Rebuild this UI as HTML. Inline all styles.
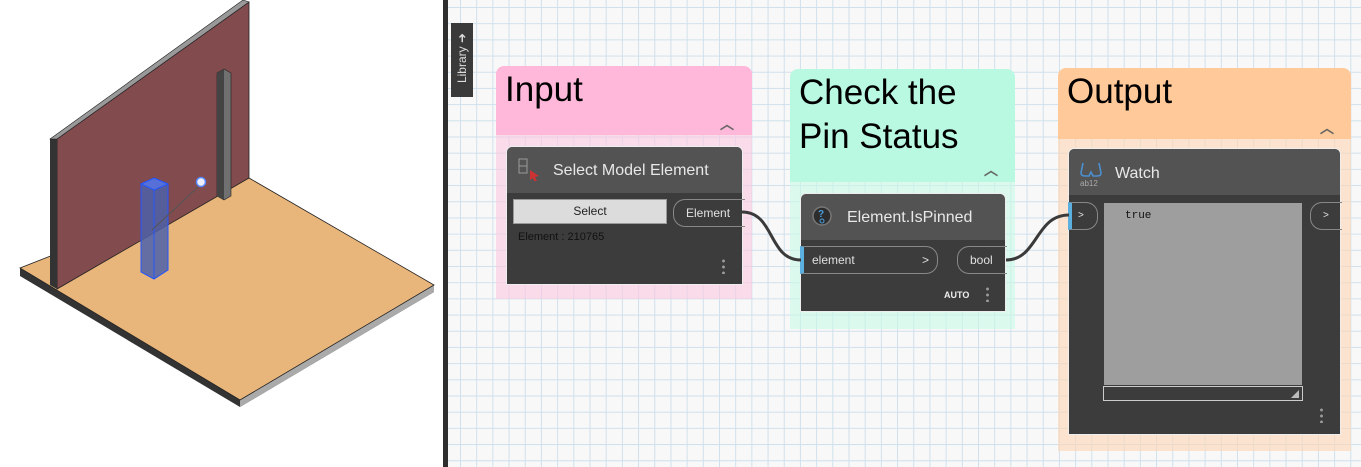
<!DOCTYPE html>
<html><head><meta charset="utf-8"><style>
*{margin:0;padding:0;box-sizing:border-box}
body{width:1361px;height:467px;overflow:hidden;background:#fff;font-family:"Liberation Sans","DejaVu Sans",sans-serif;position:relative}
.canvas{position:absolute;left:448px;top:0;width:913px;height:467px;background-color:#f8f8f8;
background-image:linear-gradient(to right,#d0e0ec 1px,transparent 1px),linear-gradient(to bottom,#d0e0ec 1px,transparent 1px);
background-size:16.2px 16.2px;background-position:12px 7px}
.div{position:absolute;left:443px;top:0;width:5px;height:467px;background:#2e2e2e}
.lib{position:absolute;left:451px;top:23px;width:22px;height:74px;background:#3a3a3a;color:#ddd;font-size:12px}
.lib span{position:absolute;left:-24px;top:28px;transform:rotate(-90deg);width:70px;text-align:center;white-space:nowrap}
.grp{position:absolute;border-radius:8px 8px 0 0;overflow:hidden}
.gh{position:absolute;left:0;right:0;top:0;font-size:35px;color:#000;padding:2px 0 0 9px;line-height:44px}
.gb{position:absolute;left:0;right:0;bottom:0}
.car{position:absolute;font-size:14px;color:#666;font-weight:bold}
.node{position:absolute;background:#3c3c3c;border:1px solid #eee;border-radius:6px 6px 0 0}
.nh{position:absolute;left:0;right:0;top:0;background:#535353;border-radius:6px 6px 0 0;color:#e8e8e8;font-size:16px}
.port{position:absolute;border:1px solid #888;border-radius:12px;color:#e0e0e0;font-size:12px;height:28px;line-height:26px}
.dots{position:absolute;width:3px;height:16px;background:radial-gradient(circle,#999 1.3px,transparent 1.6px) 0 0/3px 6px repeat-y}
</style></head><body>
<svg width="443" height="467" style="position:absolute;left:0;top:0">
<polygon points="20,268 249,178 434,285 434,292 240,407 20,276" fill="#333"/>
<polygon points="240,400 434,285 434,292 240,407" fill="#aaa"/>
<polygon points="20,268 249,178 434,285 240,400" fill="#e8b57b" stroke="#222" stroke-width="0.8"/>
<polygon points="57,139 249,2 249,178 57,289" fill="#824b4e" stroke="#222" stroke-width="0.8"/>
<polygon points="50,139 57,139 57,289 50,285" fill="#333"/>
<polygon points="50,139 243,0 249,2 57,139" fill="#999" stroke="#222" stroke-width="0.6"/>
<polygon points="217,73 224,69 231,73 231,196 224,200 217,196" fill="#707070" stroke="#222" stroke-width="0.6"/>
<polygon points="217,73 224,69 224,200 217,196" fill="#444"/>
<polygon points="141,184 154,178 168,184 168,270 154,279 141,272" fill="#4d62a9" fill-opacity="0.85" stroke="#2255ff" stroke-width="1"/>
<polygon points="141,184 154,178 168,184 154,190" fill="#5670d8" stroke="#2255ff" stroke-width="1"/>
<line x1="154" y1="190" x2="154" y2="279" stroke="#2255ff"/>
<line x1="152" y1="230" x2="198" y2="187" stroke="#555"/>
<circle cx="201" cy="182" r="4.5" fill="#eef" stroke="#58f" stroke-width="1.5"/>
</svg>
<div class="div"></div>
<div class="canvas"></div>
<div class="lib"><span>Library ➜</span></div>

<div class="grp" style="left:496px;top:66px;width:256px;height:233px">
<div class="gh" style="height:69px;background:#ffb8da">Input</div>
<div class="gb" style="top:69px;background:rgba(252,200,225,.6)"></div>
<div class="car" style="left:224px;top:48px">︿</div>
</div>
<div class="node" style="left:506px;top:146px;width:237px;height:139px">
<div class="nh" style="height:46px"><svg width="30" height="30" style="position:absolute;left:10px;top:10px"><rect x="2" y="2" width="8" height="14" fill="none" stroke="#999"/><line x1="2" y1="9" x2="10" y2="9" stroke="#999"/><path d="M13 13 L22 19 L18 20 L20 24 L17 24 L16 21 L13 23Z" fill="#c33"/></svg><span style="position:absolute;left:46px;top:15px">Select Model Element</span></div>
<div style="position:absolute;left:6px;top:52px;width:154px;height:25px;background:#dcdcdc;border:1px solid #999;color:#222;font-size:12px;text-align:center;line-height:23px">Select</div>
<div class="port" style="left:166px;top:52px;width:72px;border-right:none;border-radius:12px 0 0 12px;padding-left:12px">Element</div>
<div style="position:absolute;left:11px;top:84px;color:#111;font-size:11px">Element : 210765</div>
<div class="dots" style="left:215px;top:111px"></div>
</div>

<div class="grp" style="left:790px;top:69px;width:225px;height:260px">
<div class="gh" style="height:113px;background:#b9f8e1">Check the<br>Pin Status</div>
<div class="gb" style="top:113px;background:rgba(200,250,230,.6)"></div>
<div class="car" style="left:194px;top:91px">︿</div>
</div>
<div class="node" style="left:800px;top:193px;width:206px;height:119px">
<div class="nh" style="height:46px"><svg width="24" height="24" style="position:absolute;left:10px;top:11px"><circle cx="11" cy="11" r="9" fill="#2d2d2d" stroke="#777" stroke-width="1.5"/><text x="7" y="12" fill="#4a9fe0" font-size="10" font-weight="bold">?</text><circle cx="11" cy="16" r="2" fill="none" stroke="#4a9fe0"/></svg><span style="position:absolute;left:46px;top:15px">Element.IsPinned</span></div>
<div class="port" style="left:-1px;top:52px;width:138px;border-left:4px solid #5bb0e0;border-radius:0 12px 12px 0;padding-left:8px">element<span style="position:absolute;right:8px">&gt;</span></div>
<div class="port" style="left:156px;top:52px;width:50px;border-right:none;border-radius:12px 0 0 12px;padding-left:12px">bool</div>
<div style="position:absolute;left:143px;top:96px;color:#eee;font-size:9px;font-weight:bold">AUTO</div>
<div class="dots" style="left:185px;top:92px"></div>
</div>

<div class="grp" style="left:1058px;top:68px;width:293px;height:383px">
<div class="gh" style="height:71px;background:#ffc999">Output</div>
<div class="gb" style="top:71px;background:rgba(252,215,185,.65)"></div>
<div class="car" style="left:262px;top:50px">︿</div>
</div>
<div class="node" style="left:1068px;top:148px;width:273px;height:287px">
<div class="nh" style="height:46px"><svg width="26" height="30" style="position:absolute;left:10px;top:12px"><path d="M4 2 L2 12 Q2 15 6 15 L10 15 L12 11 L14 15 L18 15 Q22 15 22 12 L20 2" fill="none" stroke="#4a8fd0" stroke-width="1.6"/><text x="1" y="25" fill="#aaa" font-size="8">ab12</text></svg><span style="position:absolute;left:46px;top:16px">Watch</span></div>
<div class="port" style="left:-1px;top:53px;width:30px;border-left:4px solid #5bb0e0;border-radius:0 12px 12px 0;padding-left:6px;font-size:10px">&gt;</div>
<div class="port" style="left:241px;top:53px;width:32px;border-right:none;border-radius:12px 0 0 12px;padding-left:12px;font-size:10px">&gt;</div>
<div style="position:absolute;left:35px;top:54px;width:198px;height:182px;background:#9e9e9e;color:#111;font-family:'Liberation Mono',monospace;font-size:11px;padding:7px 0 0 21px">true</div>
<div style="position:absolute;left:34px;top:237px;width:200px;height:15px;border:1px solid #ccc"><div style="position:absolute;right:3px;bottom:2px;width:0;height:0;border-left:8px solid transparent;border-bottom:8px solid #bbb"></div></div>
<div class="dots" style="left:251px;top:258px"></div>
</div>

<svg width="1361" height="467" style="position:absolute;left:0;top:0">
<path d="M742 212 C775 212,768 260,801 260" fill="none" stroke="#3a3a3a" stroke-width="3"/>
<path d="M1006 260 C1038 260,1035 215,1069 215" fill="none" stroke="#3a3a3a" stroke-width="3"/>
</svg>
</body></html>
